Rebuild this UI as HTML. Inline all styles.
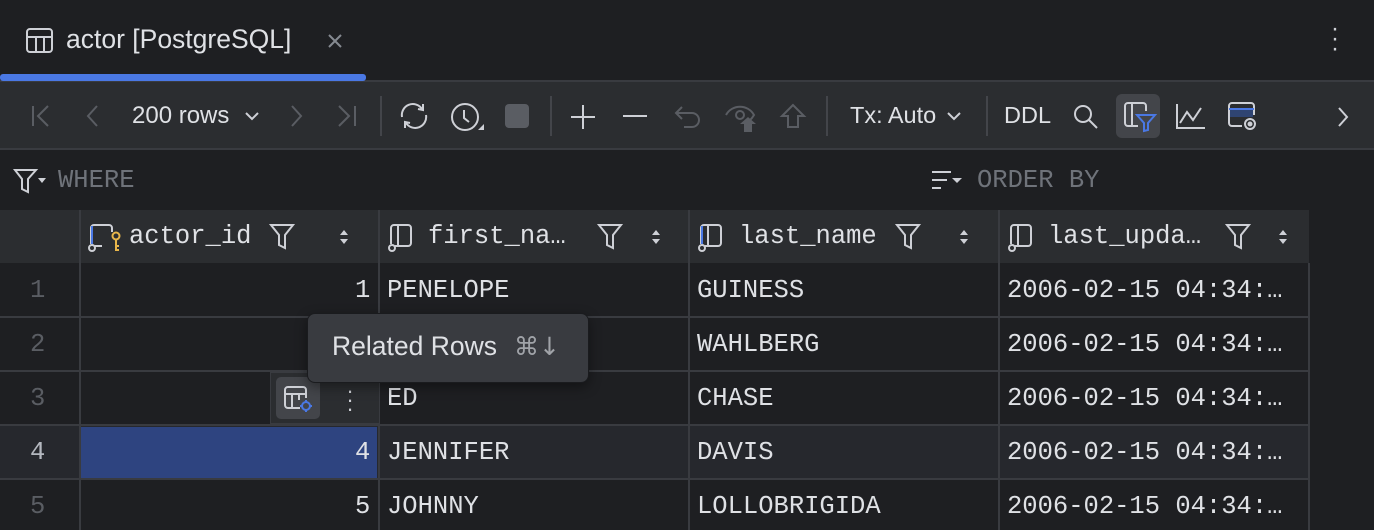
<!DOCTYPE html>
<html><head><meta charset="utf-8"><style>
*{margin:0;padding:0;box-sizing:border-box}
body{width:1374px;height:530px;background:#1e1f22;position:relative;overflow:hidden;font-family:"Liberation Sans",sans-serif;color:#dfe1e5}
.a{position:absolute}
.mono{font-family:"Liberation Mono",monospace;font-size:25.5px;white-space:nowrap}
svg{position:absolute;overflow:visible}
</style></head><body>
<!-- tab bar -->
<div class="a" style="left:0;top:80px;width:1374px;height:2px;background:#393b40"></div>
<div class="a" style="left:0;top:74px;width:366px;height:7px;border-radius:3px;background:#4a78e4"></div>
<svg style="left:26px;top:28px" width="28" height="26" fill="none" stroke="#ced0d6" stroke-width="2"><rect x="1" y="1" width="25" height="23" rx="3"/><line x1="1" y1="9" x2="26" y2="9"/><line x1="10" y1="9" x2="10" y2="24"/><line x1="18" y1="9" x2="18" y2="24"/></svg>
<div class="a" style="left:66px;top:24px;font-size:26.5px;color:#dfe1e5;white-space:nowrap">actor [PostgreSQL]</div>
<svg style="left:327px;top:33px" width="16" height="16" stroke="#868a91" stroke-width="2"><path d="M2 2 L14 14 M14 2 L2 14"/></svg>
<div class="a" style="left:1328px;top:24px;width:14px;text-align:center;font-size:24px;line-height:10px;color:#ced0d6">·<br>·<br>·</div>
<!-- toolbar -->
<div class="a" style="left:0;top:82px;width:1374px;height:66px;background:#2b2d30"></div>
<div class="a" style="left:0;top:148px;width:1374px;height:2px;background:#393b40"></div>
<svg style="left:30px;top:104px" width="24" height="24" fill="none" stroke="#5a5d63" stroke-width="2"><line x1="3" y1="2" x2="3" y2="22"/><path d="M18 2 L8 12 L18 22"/></svg>
<svg style="left:84px;top:104px" width="24" height="24" fill="none" stroke="#5a5d63" stroke-width="2"><path d="M13 2 L4 12 L13 22"/></svg>
<div class="a" style="left:132px;top:102px;font-size:24px;white-space:nowrap">200 rows</div>
<svg style="left:244px;top:110px" width="16" height="12" fill="none" stroke="#ced0d6" stroke-width="2"><path d="M2 3 L8 9 L14 3"/></svg>
<svg style="left:288px;top:104px" width="24" height="24" fill="none" stroke="#5a5d63" stroke-width="2"><path d="M4 2 L13 12 L4 22"/></svg>
<svg style="left:336px;top:104px" width="24" height="24" fill="none" stroke="#5a5d63" stroke-width="2"><path d="M3 2 L13 12 L3 22"/><line x1="19" y1="2" x2="19" y2="22"/></svg>
<div class="a" style="left:380px;top:96px;width:2px;height:40px;background:#43454a"></div>
<svg style="left:398px;top:102px" width="32" height="28" fill="none" stroke="#ced0d6" stroke-width="2"><path d="M4 15 A11 11 0 0 1 24 7"/><path d="M28 13 A11 11 0 0 1 8 21"/><path d="M20 7 L25 8 L25 2"/><path d="M12 21 L7 20 L7 26"/></svg>
<svg style="left:450px;top:102px" width="34" height="32" fill="none" stroke="#ced0d6" stroke-width="2"><circle cx="15" cy="15" r="13"/><path d="M14 8 V16 L19 20"/><path d="M28 28 L34 28 L34 22 Z" fill="#ced0d6" stroke="none"/></svg>
<div class="a" style="left:505px;top:104px;width:24px;height:24px;border-radius:4px;background:#5a5d63"></div>
<div class="a" style="left:550px;top:96px;width:2px;height:40px;background:#43454a"></div>
<svg style="left:570px;top:104px" width="26" height="26" stroke="#ced0d6" stroke-width="2"><line x1="13" y1="1" x2="13" y2="25"/><line x1="1" y1="13" x2="25" y2="13"/></svg>
<svg style="left:622px;top:104px" width="26" height="26" stroke="#ced0d6" stroke-width="2"><line x1="1" y1="12" x2="25" y2="12"/></svg>
<svg style="left:674px;top:104px" width="28" height="26" fill="none" stroke="#5a5d63" stroke-width="2"><path d="M8 3 L2 9 L8 15"/><path d="M2 9 H18 A7 7 0 0 1 18 23 H10"/></svg>
<svg style="left:724px;top:102px" width="34" height="30" fill="none" stroke="#5a5d63" stroke-width="2"><path d="M2 13 C8 2 24 2 30 13 C27 18 24 20 22 21"/><circle cx="16" cy="13" r="4"/><path d="M20 30 V22 H16 L24 15 L32 22 H28 V30 Z" fill="#5a5d63" stroke="none"/></svg>
<svg style="left:780px;top:103px" width="26" height="28" fill="none" stroke="#5a5d63" stroke-width="2"><path d="M13 2 L2 13 H8 V24 H18 V13 H24 Z"/></svg>
<div class="a" style="left:826px;top:96px;width:2px;height:40px;background:#43454a"></div>
<div class="a" style="left:850px;top:102px;font-size:23.5px;white-space:nowrap">Tx: Auto</div>
<svg style="left:946px;top:110px" width="16" height="12" fill="none" stroke="#ced0d6" stroke-width="2"><path d="M2 3 L8 9 L14 3"/></svg>
<div class="a" style="left:986px;top:96px;width:2px;height:40px;background:#43454a"></div>
<div class="a" style="left:1004px;top:102px;font-size:23.5px">DDL</div>
<svg style="left:1073px;top:104px" width="26" height="26" fill="none" stroke="#ced0d6" stroke-width="2"><circle cx="10" cy="10" r="8"/><line x1="16" y1="16" x2="24" y2="24"/></svg>
<div class="a" style="left:1116px;top:94px;width:44px;height:44px;border-radius:6px;background:#43454a"></div>
<svg style="left:1124px;top:102px" width="34" height="30" fill="none" stroke="#ced0d6" stroke-width="2"><path d="M14 24 H4 A3 3 0 0 1 1 21 V4 A3 3 0 0 1 4 1 H19 A3 3 0 0 1 22 4 V9"/><line x1="8" y1="1" x2="8" y2="24"/><path d="M13 13 H31 L24 21 V28 L20 29 V21 Z" stroke="#4a78e4"/></svg>
<svg style="left:1176px;top:103px" width="30" height="26" fill="none" stroke="#ced0d6" stroke-width="2"><path d="M1 1 V25 H29"/><path d="M4 20 L11 9 L17 17 L25 5"/></svg>
<svg style="left:1228px;top:102px" width="32" height="30" fill="none" stroke="#ced0d6" stroke-width="2"><path d="M14 24 H4 A3 3 0 0 1 1 21 V4 A3 3 0 0 1 4 1 H23 A3 3 0 0 1 26 4 V13"/><rect x="2" y="7" width="23" height="8" fill="#2f4472" stroke="none"/><line x1="1" y1="7" x2="26" y2="7" stroke="#4a78e4"/><circle cx="22" cy="22" r="5"/><circle cx="22" cy="22" r="1.5" fill="#ced0d6"/></svg>
<svg style="left:1336px;top:106px" width="14" height="22" fill="none" stroke="#ced0d6" stroke-width="2"><path d="M3 2 L11 11 L3 20"/></svg>
<!-- filter row -->
<svg style="left:14px;top:168px" width="32" height="26" fill="none" stroke="#ced0d6" stroke-width="2"><path d="M1 2 H22 L14 11 V24 L8 21 V11 Z"/><path d="M24 10 H32 L28 15 Z" fill="#ced0d6" stroke="none"/></svg>
<div class="a mono" style="left:58px;top:166px;color:#6f737a">WHERE</div>
<svg style="left:931px;top:170px" width="32" height="22" fill="none" stroke="#ced0d6" stroke-width="2"><line x1="1" y1="2" x2="20" y2="2"/><line x1="1" y1="10" x2="16" y2="10"/><line x1="1" y1="18" x2="10" y2="18"/><path d="M21 8 H31 L26 13 Z" fill="#ced0d6" stroke="none"/></svg>
<div class="a mono" style="left:977px;top:166px;color:#6f737a">ORDER BY</div>
<!-- header row -->
<div class="a" style="left:0;top:210px;width:1309px;height:53px;background:#2b2d30"></div>
<div class="a" style="left:0;top:425px;width:1309px;height:54px;background:#26282d"></div>
<div class="a" style="left:81px;top:427px;width:296px;height:51px;background:#2e4480"></div>
<div class="a" style="left:79px;top:210px;width:2px;height:320px;background:#393b40"></div>
<div class="a" style="left:378px;top:210px;width:2px;height:320px;background:#393b40"></div>
<div class="a" style="left:688px;top:210px;width:2px;height:320px;background:#393b40"></div>
<div class="a" style="left:998px;top:210px;width:2px;height:320px;background:#393b40"></div>
<div class="a" style="left:1308px;top:263px;width:2px;height:267px;background:#393b40"></div>
<div class="a" style="left:0;top:316px;width:1309px;height:2px;background:#393b40"></div>
<div class="a" style="left:0;top:370px;width:1309px;height:2px;background:#393b40"></div>
<div class="a" style="left:0;top:424px;width:1309px;height:2px;background:#393b40"></div>
<div class="a" style="left:0;top:478px;width:1309px;height:2px;background:#393b40"></div>
<!-- header cells -->
<svg style="left:88px;top:224px" width="34" height="28" fill="none" stroke="#ced0d6" stroke-width="2"><path d="M7 22 H14" /><path d="M3 20 V4 A3 3 0 0 1 6 1 H21 A3 3 0 0 1 24 4 V8"/><path d="M4 20 V2" stroke="#4a78e4"/><circle cx="4" cy="24" r="3"/><circle cx="28" cy="12" r="3.5" stroke="#e8b64a"/><path d="M28 16 V27 M28 22 H31 M28 26 H31" stroke="#e8b64a"/></svg>
<div class="a mono" style="left:129px;top:222px">actor_id</div>
<svg style="left:270px;top:224px" width="24" height="26" fill="none" stroke="#ced0d6" stroke-width="2"><path d="M1 1 H23 L15 11 V24 L9 21 V11 Z"/></svg>
<svg style="left:338px;top:228px" width="12" height="18" fill="#ced0d6"><path d="M6 2 L10 7 H2 Z M6 16 L10 11 H2 Z"/></svg>

<svg style="left:388px;top:224px" width="34" height="28" fill="none" stroke="#ced0d6" stroke-width="2"><path d="M7 22 H20 A3 3 0 0 0 23 19 V4 A3 3 0 0 0 20 1 H6 A3 3 0 0 0 3 4 V20"/><line x1="10" y1="1" x2="10" y2="22"/><circle cx="4" cy="24" r="3"/></svg>
<div class="a mono" style="left:428px;top:222px">first_na…</div>
<svg style="left:598px;top:224px" width="24" height="26" fill="none" stroke="#ced0d6" stroke-width="2"><path d="M1 1 H23 L15 11 V24 L9 21 V11 Z"/></svg>
<svg style="left:650px;top:228px" width="12" height="18" fill="#ced0d6"><path d="M6 2 L10 7 H2 Z M6 16 L10 11 H2 Z"/></svg>

<svg style="left:698px;top:224px" width="34" height="28" fill="none" stroke="#ced0d6" stroke-width="2"><path d="M7 22 H20 A3 3 0 0 0 23 19 V4 A3 3 0 0 0 20 1 H6 A3 3 0 0 0 3 4 V20"/><path d="M4 20 V2" stroke="#4a78e4"/><line x1="10" y1="1" x2="10" y2="22"/><circle cx="4" cy="24" r="3"/></svg>
<div class="a mono" style="left:739px;top:222px">last_name</div>
<svg style="left:896px;top:224px" width="24" height="26" fill="none" stroke="#ced0d6" stroke-width="2"><path d="M1 1 H23 L15 11 V24 L9 21 V11 Z"/></svg>
<svg style="left:958px;top:228px" width="12" height="18" fill="#ced0d6"><path d="M6 2 L10 7 H2 Z M6 16 L10 11 H2 Z"/></svg>

<svg style="left:1008px;top:224px" width="34" height="28" fill="none" stroke="#ced0d6" stroke-width="2"><path d="M7 22 H20 A3 3 0 0 0 23 19 V4 A3 3 0 0 0 20 1 H6 A3 3 0 0 0 3 4 V20"/><line x1="10" y1="1" x2="10" y2="22"/><circle cx="4" cy="24" r="3"/></svg>
<div class="a mono" style="left:1048px;top:222px">last_upda…</div>
<svg style="left:1226px;top:224px" width="24" height="26" fill="none" stroke="#ced0d6" stroke-width="2"><path d="M1 1 H23 L15 11 V24 L9 21 V11 Z"/></svg>
<svg style="left:1277px;top:228px" width="12" height="18" fill="#ced0d6"><path d="M6 2 L10 7 H2 Z M6 16 L10 11 H2 Z"/></svg>

<!-- rows -->
<div class="a mono" style="left:30px;top:276px;color:#5a5d63">1</div>
<div class="a mono" style="left:30px;top:330px;color:#5a5d63">2</div>
<div class="a mono" style="left:30px;top:384px;color:#5a5d63">3</div>
<div class="a mono" style="left:30px;top:438px;color:#b4b8bf">4</div>
<div class="a mono" style="left:30px;top:492px;color:#5a5d63">5</div>

<div class="a mono" style="left:355px;top:276px">1</div>
<div class="a mono" style="left:355px;top:438px">4</div>
<div class="a mono" style="left:355px;top:492px">5</div>

<div class="a mono" style="left:387px;top:276px">PENELOPE</div>
<div class="a mono" style="left:387px;top:384px">ED</div>
<div class="a mono" style="left:387px;top:438px">JENNIFER</div>
<div class="a mono" style="left:387px;top:492px">JOHNNY</div>

<div class="a mono" style="left:697px;top:276px">GUINESS</div>
<div class="a mono" style="left:697px;top:330px">WAHLBERG</div>
<div class="a mono" style="left:697px;top:384px">CHASE</div>
<div class="a mono" style="left:697px;top:438px">DAVIS</div>
<div class="a mono" style="left:697px;top:492px">LOLLOBRIGIDA</div>

<div class="a mono" style="left:1007px;top:276px">2006-02-15 04:34:…</div>
<div class="a mono" style="left:1007px;top:330px">2006-02-15 04:34:…</div>
<div class="a mono" style="left:1007px;top:384px">2006-02-15 04:34:…</div>
<div class="a mono" style="left:1007px;top:438px">2006-02-15 04:34:…</div>
<div class="a mono" style="left:1007px;top:492px">2006-02-15 04:34:…</div>

<!-- inline toolbar -->
<div class="a" style="left:270px;top:372px;width:110px;height:52px;background:#2b2d30;border:1px solid #393b40"></div>
<div class="a" style="left:276px;top:377px;width:44px;height:42px;border-radius:5px;background:#43454a"></div>
<svg style="left:284px;top:386px" width="34" height="30" fill="none" stroke="#ced0d6" stroke-width="2"><path d="M16 22 H4 A3 3 0 0 1 1 19 V4 A3 3 0 0 1 4 1 H19 A3 3 0 0 1 22 4 V12"/><line x1="1" y1="8" x2="22" y2="8"/><line x1="8" y1="8" x2="8" y2="22"/><line x1="15" y1="8" x2="15" y2="14"/><circle cx="22" cy="20" r="4" stroke="#4a78e4"/><path d="M22 14 V16 M22 24 V26 M16 20 H18 M26 20 H28" stroke="#4a78e4"/></svg>
<div class="a" style="left:343px;top:386px;width:14px;text-align:center;font-size:22px;line-height:9px;color:#ced0d6">·<br>·<br>·</div>

<!-- popup -->
<div class="a" style="left:307px;top:313px;width:282px;height:70px;border-radius:8px;background:#393b40;border:1px solid #1a1b1e;box-shadow:0 4px 12px rgba(0,0,0,.4)"></div>
<div class="a" style="left:332px;top:331px;font-size:26.5px;color:#dfe1e5;white-space:nowrap">Related Rows</div>
<div class="a" style="left:514px;top:332px;font-size:25px;color:#a0a3a8;font-family:'DejaVu Sans',sans-serif;white-space:nowrap">⌘↓</div>
</body></html>
